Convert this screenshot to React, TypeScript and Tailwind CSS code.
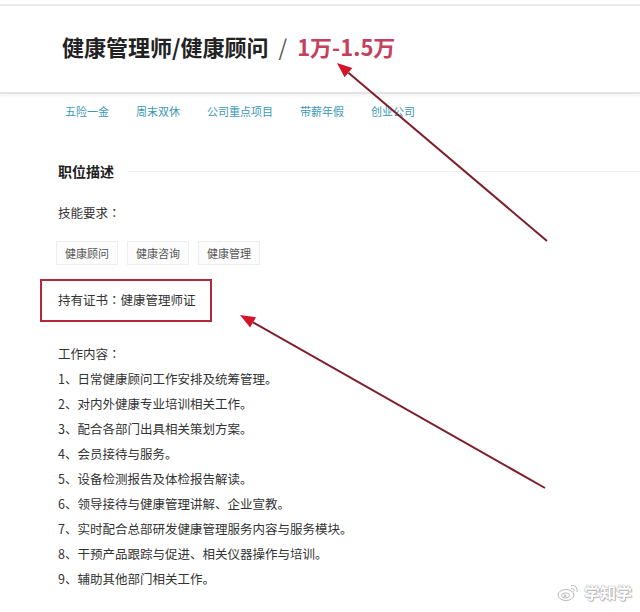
const font = "font-['Microsoft_YaHei','Noto_Sans_CJK_SC',sans-serif]";

const perks = ["五险一金", "周末双休", "公司重点项目", "带薪年假", "创业公司"];
const skills = ["健康顾问", "健康咨询", "健康管理"];
const duties = [
  "1、日常健康顾问工作安排及统筹管理。",
  "2、对内外健康专业培训相关工作。",
  "3、配合各部门出具相关策划方案。",
  "4、会员接待与服务。",
  "5、设备检测报告及体检报告解读。",
  "6、领导接待与健康管理讲解、企业宣教。",
  "7、实时配合总部研发健康管理服务内容与服务模块。",
  "8、干预产品跟踪与促进、相关仪器操作与培训。",
  "9、辅助其他部门相关工作。",
];

// full-width colon, centred like the original page's font
const Colon = () => <span className="font-['Noto_Sans_CJK_TC',sans-serif]">：</span>;

function Arrow({ x1, y1, x2, y2 }: { x1: number; y1: number; x2: number; y2: number }) {
  const a = Math.atan2(y2 - y1, x2 - x1);
  const len = 15;
  const w = 6;
  const bx = x2 - len * Math.cos(a);
  const by = y2 - len * Math.sin(a);
  const p1 = `${bx + w * Math.sin(a)},${by - w * Math.cos(a)}`;
  const p2 = `${bx - w * Math.sin(a)},${by + w * Math.cos(a)}`;
  return (
    <g>
      <line x1={x1} y1={y1} x2={bx} y2={by} stroke="#7d1e2b" strokeWidth="2" />
      <polygon points={`${x2},${y2} ${p1} ${p2}`} fill="#d3142a" />
    </g>
  );
}

export default function App() {
  return (
    <div className={`relative h-[612px] w-[640px] overflow-hidden bg-white ${font}`}>
      <div className="h-[4px]" />
      <div className="h-[2px] bg-[#ececec]" />

      {/* header */}
      <div className="flex h-[88px] items-center pb-[6px] pl-[62px] border-b-2 border-[#e4e4e4] shadow-[0_2px_3px_rgba(0,0,0,0.05)]">
        <h1 className="text-[22px] font-bold leading-none text-[#222]">
          健康管理师/健康顾问
          <span className="mx-[10px] font-normal text-[#555]">/</span>
          <span className="text-[#c4405d]">1万-1.5万</span>
        </h1>
      </div>

      <div className="flex gap-[27px] pl-[65px] pt-[9px] text-[11px] leading-[16px] text-[#3c98b4]">
        {perks.map((p) => (
          <span key={p}>{p}</span>
        ))}
      </div>

      {/* 职位描述 */}
      <div className="mt-[42px] flex items-center">
        <h2 className="pl-[58px] pr-[14px] text-[14px] font-bold leading-[20px] text-[#222]">
          职位描述
        </h2>
        <div className="h-px flex-1 bg-[#efefef]" />
      </div>

      <div className="pl-[58px] pt-[23px] text-[12.5px] leading-[18px] text-[#333]">
        技能要求<Colon />
      </div>

      <div className="mt-[19px] flex gap-[9px] pl-[56px]">
        {skills.map((s) => (
          <span
            key={s}
            className="border border-[#eeeeee] bg-[#fcfcfc] px-[8px] text-[11px] leading-[22px] text-[#555]"
          >
            {s}
          </span>
        ))}
      </div>

      <div className="ml-[40px] mt-[14px] flex h-[43px] w-[172px] items-center border-2 border-[#b3283b] pl-[16px] text-[12.5px] text-[#333]">
        持有证书<Colon />健康管理师证
      </div>

      <div className="pl-[58px] pt-[19px] text-[12.5px] leading-[25px] text-[#333]">
        <p>
          工作内容<Colon />
        </p>
        {duties.map((d) => (
          <p key={d}>{d}</p>
        ))}
      </div>

      {/* watermark */}
      <div className="absolute bottom-[8px] right-[8px] flex items-center gap-[5px]">
        <svg width="22" height="20" viewBox="0 0 22 20" fill="none" stroke="#b8b8b8" strokeWidth="1">
          <ellipse cx="9" cy="13" rx="8" ry="5.5" />
          <ellipse cx="8.5" cy="13.5" rx="4" ry="2.6" />
          <circle cx="8" cy="13.8" r="1" />
          <path d="M14 6.5 C16 6 17.5 7.5 17 9.5" />
          <path d="M14 3.5 C18 2.5 21 6 20 10" />
        </svg>
        <span className="text-[16px] font-bold text-white [text-shadow:0_0_1px_#999,0_0_1px_#999,1px_1px_1px_#bbb]">
          学知学
        </span>
      </div>

      {/* annotation arrows */}
      <svg className="pointer-events-none absolute inset-0" width="640" height="612">
        <Arrow x1={547} y1={241} x2={337} y2={63} />
        <Arrow x1={545} y1={488} x2={240} y2={315} />
      </svg>
    </div>
  );
}
